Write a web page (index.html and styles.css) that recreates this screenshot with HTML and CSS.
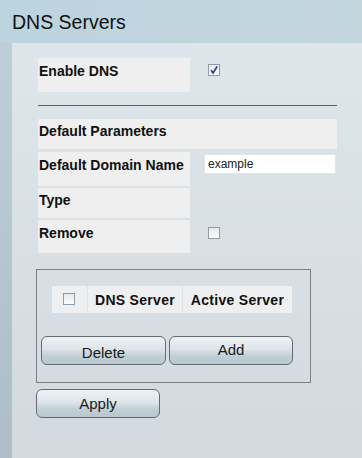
FILE: index.html
```html
<!DOCTYPE html>
<html lang="en">
<head>
    <meta charset="UTF-8">
    <title>DNS Servers</title>
    <link rel="stylesheet" href="styles.css">
</head>
<body>
    <div class="header">
        <h1>DNS Servers</h1>
    </div>
    <div class="main">
        <div class="strip"></div>
        <div class="panel">
            <div class="row row-enable">
                <div class="label">Enable DNS</div>
                <div class="value">
                    <span class="box checked">
                        <svg width="10" height="10" viewBox="0 0 10 10"><path d="M2 5.2 L4 8 L8.2 1.5" fill="none" stroke="#2a3f8a" stroke-width="1.6"/></svg>
                    </span>
                </div>
            </div>

            <div class="rule"></div>

            <div class="section">Default Parameters</div>

            <div class="row row-domain">
                <div class="label">Default Domain Name</div>
                <div class="value">
                    <input type="text" class="text-input" value="example">
                </div>
            </div>

            <div class="row row-type">
                <div class="label">Type</div>
                <div class="value"></div>
            </div>

            <div class="row row-remove">
                <div class="label">Remove</div>
                <div class="value">
                    <span class="box"></span>
                </div>
            </div>

            <div class="servers">
                <table class="server-table">
                    <tr>
                        <th class="col-check"><span class="box small"></span></th>
                        <th class="col-dns">DNS Server</th>
                        <th class="col-active">Active Server</th>
                    </tr>
                </table>
                <div class="actions">
                    <button class="btn btn-delete">Delete</button>
                    <button class="btn btn-add">Add</button>
                </div>
            </div>

            <button class="btn btn-apply">Apply</button>
        </div>
    </div>
</body>
</html>
```

FILE: styles.css
```css
body {
    margin: 0;
    width: 362px;
    height: 458px;
    overflow: hidden;
    font-family: "Liberation Sans", Arial, sans-serif;
    background-color: #d6dee3;
}

.header {
    height: 43px;
    padding-left: 12px;
    box-sizing: border-box;
    background: linear-gradient(to right, #bcd4df, #c3d6de);
}

h1 {
    margin: 0;
    padding-top: 11px;
    font-size: 19.5px;
    font-weight: normal;
    color: #111;
}

.main {
    display: flex;
    height: 415px;
}

.strip {
    width: 12px;
    background: linear-gradient(#bccfd9, #aebdc7);
}

.panel {
    flex: 1;
    padding: 15px 0 0 26px;
    background: linear-gradient(#dde6eb, #d3dadf);
}

.row {
    display: flex;
    margin-bottom: 2px;
}

.label {
    width: 152px;
    padding: 5px 0 0 1px;
    box-sizing: border-box;
    background-color: #efefef;
    font-size: 14px;
    font-weight: bold;
    color: #111;
}

.value {
    padding-left: 14px;
}

.row-enable { height: 34px; }
.row-domain { height: 34px; }
.row-type { height: 30px; }
.row-type .label { padding-top: 4px; }
.row-remove { height: 33px; }

.row-enable .value { padding: 6px 0 0 18px; }
.row-remove .value { padding: 7px 0 0 18px; }
.row-domain .value { padding-top: 2px; }

.box {
    display: inline-block;
    width: 12px;
    height: 12px;
    box-sizing: border-box;
    border: 1px solid #8e9ca6;
    background: linear-gradient(#e6eaee, #fbfcfc);
    vertical-align: top;
}

.box svg {
    display: block;
    margin: 0;
}

.rule {
    width: 299px;
    height: 1px;
    margin: 13px 0 13px;
    background-color: #5e6266;
}

.section {
    width: 299px;
    height: 30px;
    padding: 4px 0 0 1px;
    margin-bottom: 3px;
    box-sizing: border-box;
    background-color: #efefef;
    font-size: 14px;
    font-weight: bold;
    color: #111;
}

.text-input {
    width: 132px;
    height: 20px;
    padding: 0 3px;
    border: 1px solid #e2e6e8;
    box-sizing: border-box;
    background-color: #fff;
    font-family: "Liberation Sans", Arial, sans-serif;
    font-size: 12px;
    color: #222;
    outline: none;
}

.servers {
    width: 275px;
    height: 114px;
    margin: 16px 0 0 -2px;
    padding: 16px 0 0 0;
    box-sizing: border-box;
    border: 1px solid #7b7f83;
}

.server-table {
    margin-left: 15px;
    border-collapse: separate;
    border-spacing: 0;
}

.server-table th {
    height: 27px;
    padding: 0;
    background-color: #eeeff0;
    font-size: 14px;
    font-weight: bold;
    letter-spacing: 0.3px;
    color: #111;
    border-left: 1px solid #dde3e7;
}

.server-table th:first-child {
    border-left: none;
}

.col-check {
    width: 35px;
    text-align: left;
}

.col-check .box {
    margin: 1px 0 0 11px;
}

.col-dns {
    width: 94px;
}

.col-active {
    width: 109px;
}

.actions {
    display: flex;
    gap: 3px;
    margin: 23px 0 0 4px;
}

.btn {
    height: 29px;
    padding: 0;
    border: 1px solid #656c71;
    border-radius: 6px;
    background: linear-gradient(#eef2f4, #dde5e9 45%, #c0ced5 72%, #b9c8cf);
    font-family: "Liberation Sans", Arial, sans-serif;
    font-size: 15px;
    color: #1a1a1a;
    cursor: pointer;
}

.btn-delete {
    width: 125px;
    padding-top: 3px;
}

.btn-add {
    width: 124px;
    padding-bottom: 2px;
}

.btn-apply {
    display: block;
    width: 124px;
    margin: 6px 0 0 -2px;
}
```
